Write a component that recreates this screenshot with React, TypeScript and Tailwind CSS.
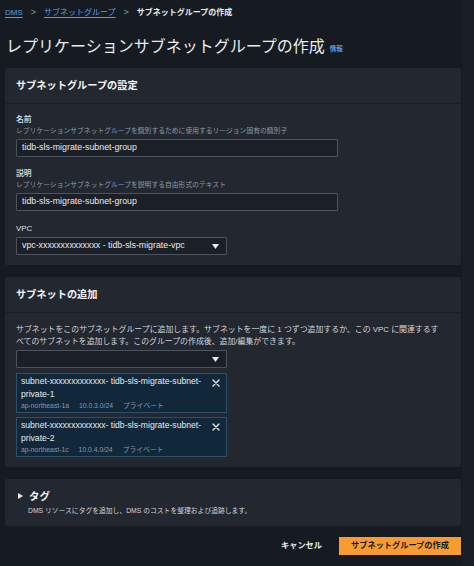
import React from 'react';

const font = "font-['Liberation_Sans','Noto_Sans_CJK_JP',sans-serif]";

function Caret() {
    return (
        <svg width="7" height="5" viewBox="0 0 7 5" className="shrink-0">
            <path d="M0 0 H7 L3.5 5 Z" fill="#e9ebed" />
        </svg>
    );
}

function Field({ label, desc, children }: { label: string; desc?: string; children: React.ReactNode }) {
    return (
        <div>
            <div className="h-[11px] text-[7.8px] leading-[11px] text-[#dfe3e6] font-medium">{label}</div>
            {desc && <div className="h-[11px] text-[6.8px] leading-[11px] text-[#8d99a8]">{desc}</div>}
            <div className="mt-[3px]">{children}</div>
        </div>
    );
}

function Panel({ title, children }: { title: string; children: React.ReactNode }) {
    return (
        <div className="bg-[#232730] rounded-[2px]">
            <div className="h-[36px] flex items-center px-[11px] border-b border-[#1b1e25] text-[10.2px] font-bold text-[#f2f3f3]">
                {title}
            </div>
            {children}
        </div>
    );
}

interface Subnet {
    id: string;
    name: string;
    az: string;
    cidr: string;
}

const subnets: Subnet[] = [
    { id: 'subnet-xxxxxxxxxxxxx- tidb-sls-migrate-subnet-', name: 'private-1', az: 'ap-northeast-1a', cidr: '10.0.3.0/24' },
    { id: 'subnet-xxxxxxxxxxxxx- tidb-sls-migrate-subnet-', name: 'private-2', az: 'ap-northeast-1c', cidr: '10.0.4.0/24' },
];

function Token({ s }: { s: Subnet }) {
    return (
        <div className="h-[40px] border border-[#2b5068] bg-[#10283a] pl-[4px] pr-[6px] pt-[1px] flex justify-between">
            <div>
                <div className="h-[12.6px] text-[8.6px] leading-[12.6px] text-[#e9ebed]">{s.id}</div>
                <div className="h-[12.6px] text-[8.6px] leading-[12.6px] text-[#e9ebed]">{s.name}</div>
                <div className="h-[10px] text-[6.8px] leading-[10px] text-[#8d99a8] flex gap-[10px]">
                    <span>{s.az}</span>
                    <span>{s.cidr}</span>
                    <span>プライベート</span>
                </div>
            </div>
            <svg width="8" height="8" viewBox="0 0 8 8" className="mt-[4px] shrink-0">
                <path d="M1 1 L7 7 M7 1 L1 7" stroke="#e9ebed" strokeWidth="1.3" strokeLinecap="round" />
            </svg>
        </div>
    );
}

export default function App() {
    return (
        <div className={`w-[474px] h-[566px] bg-[#161a21] overflow-hidden flex ${font}`}>
            <div className="flex-1 pl-[5px] pr-[1px]">
                {/* breadcrumb */}
                <div className="h-[25px] flex items-center gap-[8px] text-[8px]">
                    <span className="text-[#539fe5] underline underline-offset-2">DMS</span>
                    <span className="text-[#8d99a8] text-[9px]">&gt;</span>
                    <span className="text-[#539fe5] underline underline-offset-2">サブネットグループ</span>
                    <span className="text-[#8d99a8] text-[9px]">&gt;</span>
                    <span className="text-[#e9ebed] font-bold">サブネットグループの作成</span>
                </div>

                <div className="h-[43px] flex items-center gap-[5px] pl-[1px]">
                    <h1 className="text-[16px] text-[#e9ebed] font-normal">レプリケーションサブネットグループの作成</h1>
                    <span className="text-[6.5px] font-bold text-[#539fe5] mt-[4px]">情報</span>
                </div>

                <Panel title="サブネットグループの設定">
                    <div className="px-[11px] pt-[10px] pb-[10px]">
                        <Field label="名前" desc="レプリケーションサブネットグループを識別するために使用するリージョン固有の識別子">
                            <div className="w-[322px] h-[18px] bg-[#1b1f26] border border-[#4b535e] rounded-[1px] flex items-center px-[5px] text-[8.8px] text-[#e9ebed]">
                                tidb-sls-migrate-subnet-group
                            </div>
                        </Field>
                        <div className="mt-[11px]">
                            <Field label="説明" desc="レプリケーションサブネットグループを説明する自由形式のテキスト">
                                <div className="w-[322px] h-[18px] bg-[#1b1f26] border border-[#4b535e] rounded-[1px] flex items-center px-[5px] text-[8.8px] text-[#e9ebed]">
                                    tidb-sls-migrate-subnet-group
                                </div>
                            </Field>
                        </div>
                        <div className="mt-[12px]">
                            <Field label="VPC">
                                <div className="w-[211px] h-[18px] bg-[#1b1f26] border border-[#4b535e] rounded-[1px] flex items-center justify-between pl-[5px] pr-[7px] text-[8.8px] text-[#e9ebed]">
                                    <span>vpc-xxxxxxxxxxxxxx - tidb-sls-migrate-vpc</span>
                                    <Caret />
                                </div>
                            </Field>
                        </div>
                    </div>
                </Panel>

                <div className="mt-[12px]">
                    <Panel title="サブネットの追加">
                        <div className="pl-[11px] pr-[20px] pt-[11px] pb-[10px]">
                            <p className="h-[23.4px] text-[7.9px] leading-[11.7px] text-[#d1d5db]">
                                サブネットをこのサブネットグループに追加します。サブネットを一度に 1 つずつ追加するか、この VPC に関連するすべてのサブネットを追加します。このグループの作成後、追加/編集ができます。
                            </p>
                            <div className="mt-[3px] w-[211px] h-[18px] bg-[#1b1f26] border border-[#4b535e] rounded-[1px] flex items-center justify-end pr-[7px]">
                                <Caret />
                            </div>
                            <div className="mt-[5px] w-[211px] flex flex-col gap-[4px]">
                                {subnets.map((s) => (
                                    <Token key={s.name} s={s} />
                                ))}
                            </div>
                        </div>
                    </Panel>
                </div>

                <div className="mt-[12px] bg-[#232730] rounded-[2px] h-[47px] pl-[13px] pt-[10px]">
                    <div className="flex items-center gap-[6px] h-[14px]">
                        <svg width="5" height="6" viewBox="0 0 5 6">
                            <path d="M0 0 L5 3 L0 6 Z" fill="#e9ebed" />
                        </svg>
                        <span className="text-[10.5px] font-bold text-[#f2f3f3]">タグ</span>
                    </div>
                    <div className="h-[10px] pl-[10px] mt-[3px] text-[6.8px] leading-[10px] text-[#d1d5db]">
                        DMS リソースにタグを追加し、DMS のコストを整理および追跡します。
                    </div>
                </div>

                <div className="mt-[11px] flex justify-end items-center gap-[17px]">
                    <span className="text-[8.2px] font-bold text-[#e9ebed]">キャンセル</span>
                    <button className="w-[122px] h-[18px] bg-[#f89b30] text-[8.2px] font-bold text-[#16191f] flex items-center justify-center">
                        サブネットグループの作成
                    </button>
                </div>
            </div>
            <div className="w-[12px] bg-[#1a1e27]" />
        </div>
    );
}
